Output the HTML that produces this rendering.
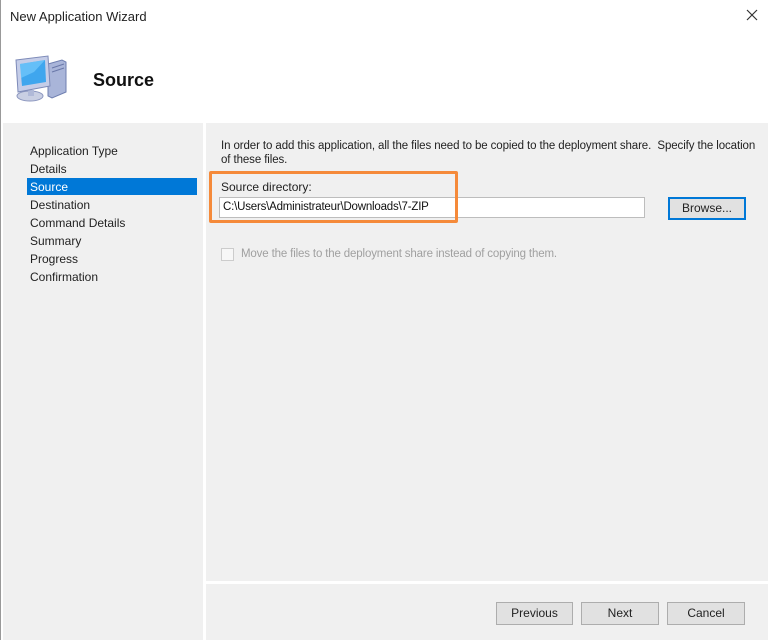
<!DOCTYPE html>
<html><head><style>
*{margin:0;padding:0;box-sizing:border-box}
body{width:768px;height:640px;background:#fff;font-family:"Liberation Sans",Arial,sans-serif;font-size:12px;color:#000;position:relative;overflow:hidden}
.a{position:absolute}
.nav div{position:absolute;left:30px;font-size:12px;color:#222}
.btn{position:absolute;height:23px;background:#e1e1e1;border:1px solid #adadad;text-align:center;line-height:21px;font-size:12px;color:#222}
</style></head><body>
<div class="a" style="left:0;top:0;width:1px;height:640px;background:#999"></div>
<div class="a" style="left:10px;top:9px;font-size:13px;color:#222">New Application Wizard</div>
<svg class="a" style="left:746px;top:9px" width="12" height="12" viewBox="0 0 12 12"><path d="M1 1L11 11M11 1L1 11" stroke="#333" stroke-width="1.2"/></svg>
<svg class="a" style="left:14px;top:54px" width="56" height="52" viewBox="0 0 56 52">
<path d="M34 10 L48 6 L52 8 L52 38 L38 44 L34 42Z" fill="#a9b5d9" stroke="#6f7fb0"/>
<path d="M38 14 L50 10 M38 18 L50 14" stroke="#6a78a8"/>
<ellipse cx="16" cy="42" rx="13" ry="5" fill="#c9cfe3" stroke="#8a95be"/>
<path d="M14 36 L20 36 L20 42 L14 42Z" fill="#b0b9d8"/>
<path d="M2 6 L34 2 L36 32 L4 38Z" fill="#c5cde8" stroke="#7d8ab8"/>
<path d="M6 10 L31 6 L32 28 L8 32Z" fill="#3fa6ee"/>
<path d="M6 10 L31 6 L20 18 L7 24Z" fill="#7fd0ff" opacity=".6"/>
</svg>
<div class="a" style="left:93px;top:70px;font-size:18px;font-weight:bold;color:#111">Source</div>
<div class="a" style="left:3px;top:123px;width:200px;height:517px;background:#f0f0f0"></div>
<div class="a" style="left:206px;top:123px;width:562px;height:458px;background:#f0f0f0"></div>
<div class="a" style="left:206px;top:584px;width:562px;height:56px;background:#f0f0f0"></div>
<div class="nav">
<div style="top:144px">Application Type</div>
<div style="top:162px">Details</div>
<div class="a" style="left:27px;top:178px;width:170px;height:17px;background:#0078d7"></div>
<div style="top:180px;color:#fff">Source</div>
<div style="top:198px">Destination</div>
<div style="top:216px">Command Details</div>
<div style="top:234px">Summary</div>
<div style="top:252px">Progress</div>
<div style="top:270px">Confirmation</div>
</div>
<div class="a" style="left:221px;top:139px;width:537px;line-height:14px;color:#222;font-size:11.5px;letter-spacing:-0.1px">In order to add this application, all the files need to be copied to the deployment share.&nbsp; Specify the location of these files.</div>
<div class="a" style="left:221px;top:180px;color:#222">Source directory:</div>
<div class="a" style="left:219px;top:197px;width:426px;height:21px;background:#fff;border:1px solid #bdbdbd;padding:3px 3px;color:#111;font-size:11.5px;letter-spacing:-0.2px">C:\Users\Administrateur\Downloads\7-ZIP</div>
<div class="a" style="left:209px;top:171px;width:249px;height:52px;border:3px solid #f58a3a;border-radius:2px"></div>
<div class="btn" style="left:668px;top:197px;width:78px;border:2px solid #0078d7;line-height:19px">Browse...</div>
<div class="a" style="left:221px;top:248px;width:13px;height:13px;border:1px solid #ccc;background:#f7f7f7"></div>
<div class="a" style="left:241px;top:248px;color:#a0a0a0;font-size:11.5px;letter-spacing:-0.15px">Move the files to the deployment share instead of copying them.</div>
<div class="btn" style="left:496px;top:602px;width:77px">Previous</div>
<div class="btn" style="left:581px;top:602px;width:78px">Next</div>
<div class="btn" style="left:667px;top:602px;width:78px">Cancel</div>
</body></html>
